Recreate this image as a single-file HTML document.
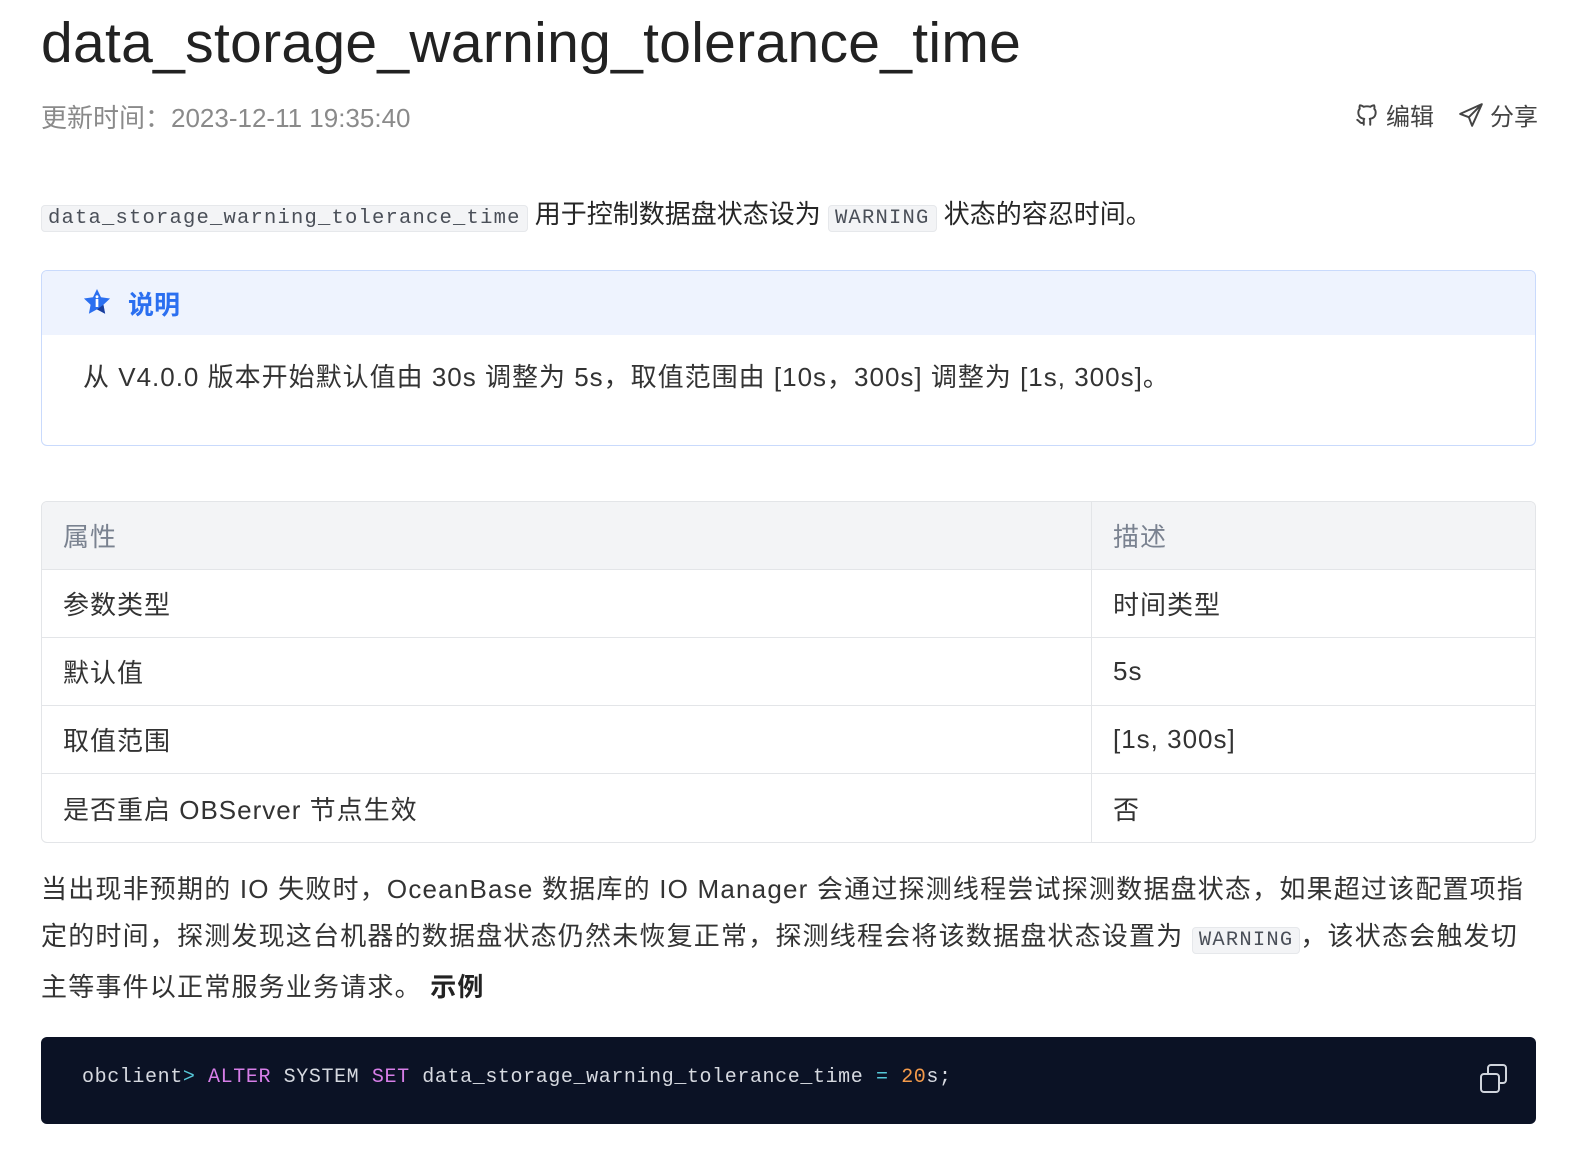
<!DOCTYPE html>
<html><head><meta charset="utf-8">
<style>
*{margin:0;padding:0;box-sizing:border-box}
html,body{width:1589px;height:1152px;overflow:hidden}
body{background:#fff;font-family:"Liberation Sans","Noto Sans CJK SC",sans-serif;color:#262626;position:relative}
.abs{position:absolute}
h1{position:absolute;left:41px;top:10px;font-size:57px;font-weight:400;letter-spacing:0.3px;color:#222;white-space:nowrap}
.meta{left:41px;top:98px;font-size:26px;color:#8a8a8a}
.act{top:97px;font-size:24px;color:#444;display:flex;align-items:center;gap:6px}
code{font-family:"Liberation Mono",monospace;font-size:20.5px;background:#f3f4f6;border:1px solid #e6e8eb;border-radius:4px;padding:1px 6px;color:#4a4f58;letter-spacing:1.2px}
.p1{left:41px;top:194px;font-size:26px;white-space:nowrap}
.note{left:41px;top:270px;width:1495px;height:176px;border:1px solid #c9dafc;border-radius:6px;background:#fff;overflow:hidden}
.note .hd{height:64px;background:#eef3fe;display:flex;align-items:center;padding-left:38px;font-size:26px;font-weight:700;color:#2b6ff0;gap:14px}
.note .bd{padding:22px 0 0 41px;font-size:26px;color:#333;letter-spacing:1px}
table{position:absolute;left:41px;top:501px;width:1495px;table-layout:fixed;border-collapse:separate;border-spacing:0;border:1px solid #e3e5e8;border-radius:6px;font-size:26px;overflow:hidden;letter-spacing:1px}
td{height:68px;padding:0 21px;border-bottom:1px solid #e3e5e8;color:#333}
tr:last-child td{border-bottom:none}
td:first-child{border-right:1px solid #e3e5e8}
tr.h td{background:#f3f4f6;color:#7a8290}
.p2{left:41px;top:866px;width:1520px;font-size:26px;line-height:46.5px;color:#333;letter-spacing:1.2px;white-space:nowrap}
.code{left:41px;top:1037px;width:1495px;height:87px;background:#0b1225;border-radius:6px}
.code .t{position:absolute;left:41px;top:29px;font-family:"Liberation Mono",monospace;font-size:20px;color:#d6d9e0;white-space:pre;letter-spacing:0.6px}
</style></head><body>
<h1>data_storage_warning_tolerance_time</h1>
<div class="abs meta">更新时间：2023-12-11 19:35:40</div>
<div class="abs act" style="left:1354px">
<svg width="26" height="26" viewBox="0 0 24 24" fill="none" stroke="#444" stroke-width="1.8" stroke-linecap="round" stroke-linejoin="round"><path d="M9 19c-4 1.5-4-2-6-2.5M15 21v-3.5c0-1 .1-1.4-.5-2 2.8-.3 5.5-1.4 5.5-6a4.6 4.6 0 0 0-1.3-3.2 4.2 4.2 0 0 0-.1-3.2s-1.1-.3-3.5 1.3a12 12 0 0 0-6.2 0C6.5 2.8 5.4 3.1 5.4 3.1a4.2 4.2 0 0 0-.1 3.2A4.6 4.6 0 0 0 4 9.5c0 4.6 2.7 5.7 5.5 6-.6.6-.6 1.2-.5 2V21"/></svg>编辑</div>
<div class="abs act" style="left:1458px">
<svg width="26" height="26" viewBox="0 0 24 24" fill="none" stroke="#444" stroke-width="1.8" stroke-linejoin="round"><path d="M22 2 2 11l8 3 3 8z M10 14 22 2"/></svg>分享</div>
<div class="abs p1"><code>data_storage_warning_tolerance_time</code> 用于控制数据盘状态设为 <code>WARNING</code> 状态的容忍时间。</div>
<div class="abs note"><div class="hd"><svg width="34" height="32" viewBox="0 0 24 24"><path d="M12 1.5l3 6.2 6.8.9-5 4.7 1.3 6.8L12 16.8l-6.1 3.3 1.3-6.8-5-4.7 6.8-.9z" fill="#2b6ff0"/><path d="M12 16.8l6.1 3.3-1.3-6.8z" fill="#1a3e9c"/><rect x="11" y="9" width="2" height="6" fill="#fff"/><circle cx="12" cy="7.3" r="1.1" fill="#fff"/></svg>说明</div>
<div class="bd">从 V4.0.0 版本开始默认值由 30s 调整为 5s，取值范围由 [10s，300s] 调整为 [1s, 300s]。</div></div>
<table>
<colgroup><col style="width:1050px"><col></colgroup>
<tr class="h"><td>属性</td><td>描述</td></tr>
<tr><td>参数类型</td><td>时间类型</td></tr>
<tr><td>默认值</td><td>5s</td></tr>
<tr><td>取值范围</td><td>[1s, 300s]</td></tr>
<tr><td>是否重启 OBServer 节点生效</td><td>否</td></tr>
</table>
<div class="abs p2">当出现非预期的 IO 失败时，OceanBase 数据库的 IO Manager 会通过探测线程尝试探测数据盘状态，如果超过该配置项指<br>定的时间，探测发现这台机器的数据盘状态仍然未恢复正常，探测线程会将该数据盘状态设置为 <code>WARNING</code>，该状态会触发切<br>主等事件以正常服务业务请求。 <b style="color:#222">示例</b></div>
<div class="abs code"><div class="t">obclient<span style="color:#56c8d8">&gt;</span> <span style="color:#d77ee8">ALTER</span> SYSTEM <span style="color:#d77ee8">SET</span> data_storage_warning_tolerance_time <span style="color:#56c8d8">=</span> <span style="color:#f39a4a">20</span>s;</div>
<svg class="abs" style="left:1438px;top:26px" width="30" height="32" viewBox="0 0 30 32" fill="none" stroke="#d0d4dc" stroke-width="2"><rect x="9" y="2" width="18" height="18" rx="3"/><rect x="2" y="11" width="18" height="18" rx="3" fill="#0b1225"/></svg>
</div>
</body></html>
